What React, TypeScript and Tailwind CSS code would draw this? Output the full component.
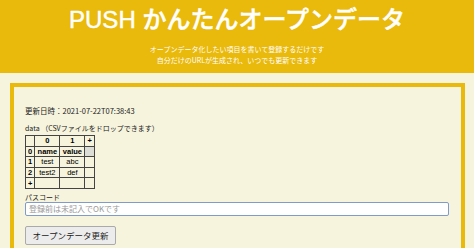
import React from "react";

const F = { fontFamily: '"Liberation Sans", "Noto Sans CJK JP", sans-serif' };
const J = { fontFamily: '"Noto Sans CJK JP", "Liberation Sans", sans-serif' };

export default function App() {
  const cell = "border border-[#444] px-[2px] h-[10.6px] leading-[9px] text-center";
  return (
    <div className="w-[474px] h-[248px] overflow-hidden bg-[#f6f4dd]" style={F}>
      <header className="h-[73px] bg-[#e9b90b] text-white text-center pt-[5px]">
        <h1 className="text-[24px] leading-[30px] font-medium [-webkit-text-stroke:0.5px_white]">PUSH かんたんオープンデータ</h1>
        <div className="mt-[9px] text-[7px] leading-[11px]" style={J}>
          <p>オープンデータ化したい項目を書いて登録するだけです</p>
          <p>自分だけのURLが生成され、いつでも更新できます</p>
        </div>
      </header>
      <div className="ml-[10px] mr-[9px] mt-[10px] h-[200px] border-[4px] border-b-0 border-[#e9b90b] pl-[11px] pr-[12px] pt-[19px] text-[#222]">
        <p className="text-[7.5px] leading-[10px]" style={J}>更新日時：2021-07-22T07:38:43</p>
        <p className="mt-[7px] text-[7px] leading-[10px]" style={J}>data （CSVファイルをドロップできます）</p>
        <table className="border-collapse text-[7.5px] mt-[2px] text-black">
          <tbody>
            <tr className="font-bold">
              <td className={cell + " w-[8px]"}></td>
              <td className={cell + " w-[25px]"}>0</td>
              <td className={cell + " w-[25px]"}>1</td>
              <td className={cell + " w-[9px]"}>+</td>
            </tr>
            <tr>
              <td className={cell + " font-bold"}>0</td>
              <td className={cell + " font-bold"}>name</td>
              <td className={cell + " font-bold"}>value</td>
              <td className={cell + " bg-[#ddddd8]"}></td>
            </tr>
            <tr>
              <td className={cell + " font-bold"}>1</td>
              <td className={cell}>test</td>
              <td className={cell}>abc</td>
              <td className={cell}></td>
            </tr>
            <tr>
              <td className={cell + " font-bold"}>2</td>
              <td className={cell}>test2</td>
              <td className={cell}>def</td>
              <td className={cell}></td>
            </tr>
            <tr>
              <td className={cell + " font-bold"}>+</td>
              <td className={cell}></td>
              <td className={cell}></td>
              <td className={cell}></td>
            </tr>
          </tbody>
        </table>
        <p className="mt-[3px] text-[7px] leading-[10px]" style={J}>パスコード</p>
        <input
          className="block w-full h-[14px] bg-white border border-[#7f9acb] rounded-[2px] px-[3px] text-[8px] placeholder:text-[#999] outline-none"
          placeholder="登録前は未記入でOKです"
          style={J}
        />
        <button
          className="mt-[10px] h-[19px] w-[91px] bg-[#ececec] border border-[#aaa] rounded-[2px] text-[8.5px] text-[#222]"
          style={J}
        >
          オープンデータ更新
        </button>
      </div>
    </div>
  );
}
